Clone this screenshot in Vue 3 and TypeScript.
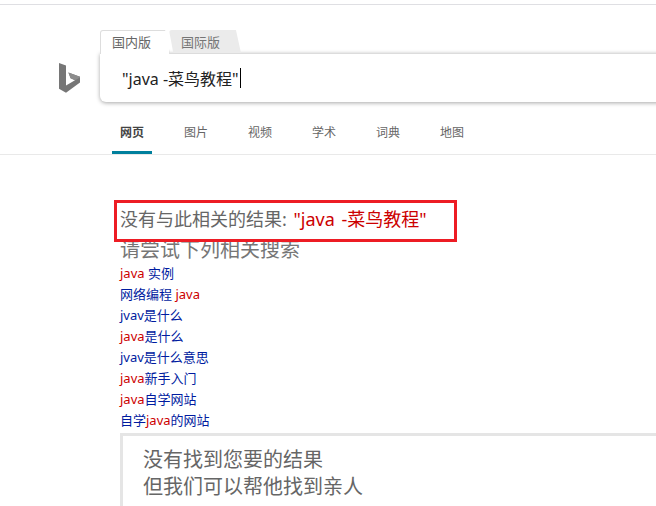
<script setup lang="ts">
interface Part { t: string; red?: boolean }
const navs: string[] = ['网页', '图片', '视频', '学术', '词典', '地图']
const links: Part[][] = [
  [{ t: 'java', red: true }, { t: ' 实例' }],
  [{ t: '网络编程 ' }, { t: 'java', red: true }],
  [{ t: 'jvav是什么' }],
  [{ t: 'java', red: true }, { t: '是什么' }],
  [{ t: 'jvav是什么意思' }],
  [{ t: 'java', red: true }, { t: '新手入门' }],
  [{ t: 'java', red: true }, { t: '自学网站' }],
  [{ t: '自学' }, { t: 'java', red: true }, { t: '的网站' }],
]
</script>

<template>
  <div class="page">
    <header class="head">
      <svg class="logo" width="21" height="30" viewBox="0 0 21 30" aria-hidden="true">
        <path d="M0 0 L7 2.4 V22.5 L16 17.3 L11.6 15.2 L9.4 9.6 L21 13.7 V19.6 L7 29.8 L0 25.8 Z" fill="#767676" />
        <path d="M11.6 15.2 L9.4 9.6 L21 13.7 V14.5 L16 17.3 Z" fill="#8c8c8c" />
      </svg>
      <div class="search">
        <div class="tabs">
          <div class="tab active">国内版</div>
          <div class="tab">国际版</div>
        </div>
        <div class="box">"java -菜鸟教程"<span class="caret"></span></div>
      </div>
    </header>
    <nav class="nav">
      <a v-for="(n, i) in navs" :key="n" class="nav-item" :class="{ on: i === 0 }">{{ n }}</a>
    </nav>
    <main class="main">
      <h2 class="none">没有与此相关的结果: <span class="red">"java -菜鸟教程"</span></h2>
      <div class="mark"></div>
      <h2 class="try">请尝试下列相关搜索</h2>
      <ul class="links">
        <li v-for="(l, i) in links" :key="i">
          <span v-for="(p, j) in l" :key="j" :class="{ hit: p.red }">{{ p.t }}</span>
        </li>
      </ul>
      <div class="notice">
        <div>没有找到您要的结果</div>
        <div>但我们可以帮他找到亲人</div>
      </div>
    </main>
  </div>
</template>

<style scoped>
.page {
  position: relative;
  width: 656px;
  height: 506px;
  overflow: hidden;
  background: #fff;
  font-family: "Noto Sans", "Noto Sans CJK SC", sans-serif;
}
.head {
  display: flex;
  align-items: flex-start;
  box-sizing: border-box;
  padding-top: 30px;
  padding-left: 59px;
  height: 102px;
  background: linear-gradient(#dfdfe3, #dfdfe3) 0 4px / 100% 1px no-repeat;
}
.logo {
  flex: none;
  margin-top: 33px;
  margin-right: 20px;
}
.search {
  flex: none;
  width: 700px;
}
.tabs {
  display: flex;
  height: 23px;
}
.tab {
  position: relative;
  width: 69px;
  height: 23px;
  line-height: 25px;
  padding-left: 12px;
  box-sizing: border-box;
  font-size: 13px;
  color: #767676;
  z-index: 0;
}
.tab::before {
  content: "";
  position: absolute;
  inset: 0 -3px 0 0;
  background: #ebebeb;
  border-radius: 3px 3px 0 0;
  clip-path: polygon(0 0, 93% 0, 100% 100%, 6% 100%);
  z-index: -1;
}
.tab.active {
  color: #666;
  z-index: 1;
}
.tab.active::before {
  background: #fff;
  border: 1px solid #ddd;
  border-bottom: 0;
  inset: 0 -1px -1px 0;
  clip-path: polygon(0 0, 93% 0, 100% 100%, 0 100%);
}
.box {
  display: flex;
  align-items: center;
  height: 49px;
  box-sizing: border-box;
  padding: 0 0 0 22px;
  border-top: 1px solid #dcdcdc;
  border-radius: 0 0 0 6px;
  background: #fff;
  box-shadow: 0 1px 4px rgba(0, 0, 0, 0.35);
  font-size: 16px;
  color: #222;
}
.caret {
  display: inline-block;
  width: 1px;
  height: 20px;
  margin-left: 1px;
  background: #000;
}
.nav {
  display: flex;
  gap: 24px;
  height: 53px;
  padding-left: 112px;
  box-sizing: border-box;
  border-bottom: 1px solid #e9e9e9;
}
.nav-item {
  width: 40px;
  height: 52px;
  box-sizing: border-box;
  text-align: center;
  line-height: 61px;
  font-size: 12px;
  color: #666;
}
.nav-item.on {
  color: #444;
  font-weight: 700;
  border-bottom: 3px solid #00809d;
}
.main {
  padding: 51px 0 0 120px;
}
.none {
  margin: 0;
  font-size: 18px;
  font-weight: 400;
  line-height: 26px;
  color: #666;
  word-spacing: 2px;
}
.red {
  color: #c00;
}
.mark {
  position: absolute;
  left: 114px;
  top: 200px;
  width: 343px;
  height: 42px;
  box-sizing: border-box;
  border: 3px solid #ed1c24;
}
.try {
  margin: 5px 0 0;
  font-size: 20px;
  font-weight: 400;
  line-height: 26px;
  color: #767676;
}
.links {
  list-style: none;
  margin: 0;
  padding: 0;
  font-size: 13px;
  line-height: 21px;
  color: #001ba0;
}
.hit {
  color: #c00;
}
.notice {
  width: 700px;
  height: 100px;
  margin-top: 2px;
  box-sizing: border-box;
  padding: 10px 0 0 20px;
  border: 3px solid #e5e5e5;
  font-size: 20px;
  line-height: 27px;
  color: #666;
}
</style>

<style>
html, body { margin: 0; overflow: hidden; }
</style>
